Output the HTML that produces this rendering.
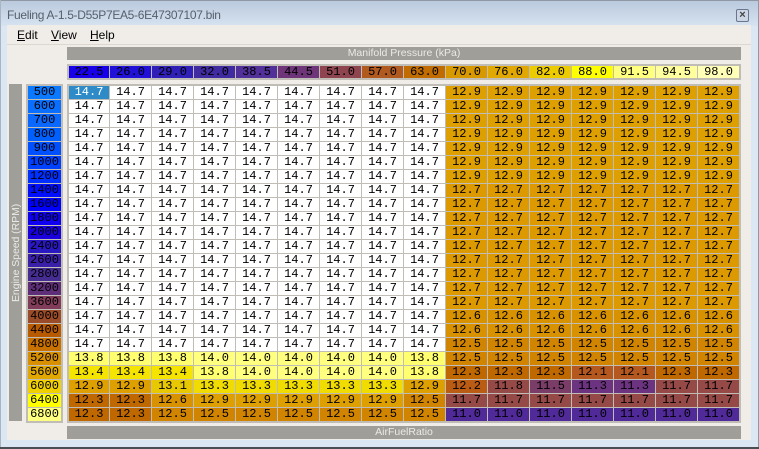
<!DOCTYPE html>
<html><head><meta charset="utf-8"><style>
html,body{margin:0;padding:0}
body{width:759px;height:449px;position:relative;overflow:hidden;background:#dce7f4;font-family:"Liberation Sans",sans-serif}
.abs{position:absolute}
#tb{left:0;top:0;width:759px;height:26px;background:linear-gradient(#b9c8dc,#d6e2f0)}
#topline{left:0;top:0;width:759px;height:1px;background:#8f98a4}
#lline{left:0;top:0;width:1px;height:449px;background:#aab4c2}
#rline{left:758px;top:0;width:1px;height:449px;background:#8f98a4}
#title{left:7px;top:8px;font-size:12px;letter-spacing:-.32px;line-height:15px;color:#56606c;white-space:nowrap}
#close{left:736px;top:9px;width:11px;height:11px;border:1px solid #6a7590;border-radius:2px;background:#cdd6e4;color:#444;font-size:11px;line-height:11px;text-align:center;font-weight:bold}
#client{left:7px;top:25px;width:744px;height:415px;background:#f0ede8}
#menu{left:7px;top:25px;width:744px;height:19px;border-bottom:1px solid #dbd8d2}
#menu span{position:absolute;top:3px;font-size:12px;line-height:14px;color:#000}
#menu u{text-decoration:underline}
.bar{background:#9f9e98;color:#eceae6;font-size:10.5px;line-height:13px;text-align:center}
#botline{left:0;top:447px;width:759px;height:2px;background:#4a4f55}
.g{display:grid;background:#c0bdb7;gap:1px}
#hd{left:67px;top:64px;padding:2px;grid-template-columns:40px repeat(15,41px);grid-auto-rows:12px}
#rp{left:26px;top:84px;padding:2px;width:33px;grid-template-columns:33px;grid-auto-rows:13px}
#tbl{left:67px;top:84px;padding:2px;grid-template-columns:40px repeat(15,41px);grid-auto-rows:13px}
.g i{display:block;font:normal 12px/13px "Liberation Mono",monospace;text-align:center;color:#000;background:#fff;overflow:hidden}
#hd i{line-height:12px}
i.s{background:#2e8bc8;color:#fff}
i.a{background:#ffff80}
i.b{background:#ffff70}
i.c{background:#f5e400}
i.d{background:#f0dc00}
i.e{background:#e8c800}
i.f{background:#dea000}
i.h{background:#dc9a00}
i.j{background:#d89200}
i.k{background:#d08400}
i.l{background:#c06800}
i.m{background:#ba5c14}
i.n{background:#b45820}
i.o{background:#954a48}
i.p{background:#7a3d68}
i.q{background:#6c3480}
i.r{background:#502a98}
</style></head><body>
<div class="abs" id="tb"></div>
<div class="abs" id="topline"></div>
<div class="abs" id="lline"></div>
<div class="abs" id="rline"></div>
<div class="abs" id="title">Fueling A-1.5-D55P7EA5-6E47307107.bin</div>
<div class="abs" id="close">&#215;</div>
<div class="abs" id="client"></div>
<div class="abs" id="menu"><span style="left:10px"><u>E</u>dit</span><span style="left:44px"><u>V</u>iew</span><span style="left:83px"><u>H</u>elp</span></div>
<div class="abs bar" style="left:67px;top:47px;width:674px;height:13px">Manifold Pressure (kPa)</div>
<div class="abs bar" style="left:67px;top:426px;width:674px;height:13px">AirFuelRatio</div>
<div class="abs bar" style="left:9px;top:84px;width:13px;height:337px"></div>
<svg class="abs" style="left:9px;top:84px" width="13" height="337"><text transform="translate(10,218) rotate(-90)" font-family="Liberation Sans" font-size="10.4" fill="#eceae6">Engine Speed (RPM)</text></svg>
<div class="abs g" id="hd">
<i style="background:#1800e8">22.5</i><i style="background:#2010d8">26.0</i><i style="background:#3020b8">29.0</i><i style="background:#402ca0">32.0</i><i style="background:#52309a">38.5</i><i style="background:#6e3578">44.5</i><i style="background:#8f4550">51.0</i><i style="background:#b05a20">57.0</i><i style="background:#c06c00">63.0</i><i style="background:#d89800">70.0</i><i style="background:#e0a800">76.0</i><i style="background:#eccc00">82.0</i><i style="background:#ffff00">88.0</i><i style="background:#ffff80">91.5</i><i style="background:#ffffa0">94.5</i><i style="background:#ffffb8">98.0</i>
</div>
<div class="abs g" id="rp">
<i style="background:#0a78ff">500</i><i style="background:#0a6eff">600</i><i style="background:#0a68ff">700</i><i style="background:#0060ff">800</i><i style="background:#0050ff">900</i><i style="background:#0040ff">1000</i><i style="background:#0030ff">1200</i><i style="background:#0010ff">1400</i><i style="background:#0000ff">1600</i><i style="background:#1000f0">1800</i><i style="background:#1a00dc">2000</i><i style="background:#2a18c0">2400</i><i style="background:#3a20a8">2600</i><i style="background:#452c90">2800</i><i style="background:#5e2f78">3200</i><i style="background:#803c58">3600</i><i style="background:#9a4c28">4000</i><i style="background:#b85a00">4400</i><i style="background:#c87000">4800</i><i style="background:#d89000">5200</i><i style="background:#e0a800">5600</i><i style="background:#f0d000">6000</i><i style="background:#ffff00">6400</i><i style="background:#ffff80">6800</i>
</div>
<div class="abs g" id="tbl">
<i class="s">14.7</i><i>14.7</i><i>14.7</i><i>14.7</i><i>14.7</i><i>14.7</i><i>14.7</i><i>14.7</i><i>14.7</i><i class="f">12.9</i><i class="f">12.9</i><i class="f">12.9</i><i class="f">12.9</i><i class="f">12.9</i><i class="f">12.9</i><i class="f">12.9</i>
<i>14.7</i><i>14.7</i><i>14.7</i><i>14.7</i><i>14.7</i><i>14.7</i><i>14.7</i><i>14.7</i><i>14.7</i><i class="f">12.9</i><i class="f">12.9</i><i class="f">12.9</i><i class="f">12.9</i><i class="f">12.9</i><i class="f">12.9</i><i class="f">12.9</i>
<i>14.7</i><i>14.7</i><i>14.7</i><i>14.7</i><i>14.7</i><i>14.7</i><i>14.7</i><i>14.7</i><i>14.7</i><i class="f">12.9</i><i class="f">12.9</i><i class="f">12.9</i><i class="f">12.9</i><i class="f">12.9</i><i class="f">12.9</i><i class="f">12.9</i>
<i>14.7</i><i>14.7</i><i>14.7</i><i>14.7</i><i>14.7</i><i>14.7</i><i>14.7</i><i>14.7</i><i>14.7</i><i class="f">12.9</i><i class="f">12.9</i><i class="f">12.9</i><i class="f">12.9</i><i class="f">12.9</i><i class="f">12.9</i><i class="f">12.9</i>
<i>14.7</i><i>14.7</i><i>14.7</i><i>14.7</i><i>14.7</i><i>14.7</i><i>14.7</i><i>14.7</i><i>14.7</i><i class="f">12.9</i><i class="f">12.9</i><i class="f">12.9</i><i class="f">12.9</i><i class="f">12.9</i><i class="f">12.9</i><i class="f">12.9</i>
<i>14.7</i><i>14.7</i><i>14.7</i><i>14.7</i><i>14.7</i><i>14.7</i><i>14.7</i><i>14.7</i><i>14.7</i><i class="f">12.9</i><i class="f">12.9</i><i class="f">12.9</i><i class="f">12.9</i><i class="f">12.9</i><i class="f">12.9</i><i class="f">12.9</i>
<i>14.7</i><i>14.7</i><i>14.7</i><i>14.7</i><i>14.7</i><i>14.7</i><i>14.7</i><i>14.7</i><i>14.7</i><i class="f">12.9</i><i class="f">12.9</i><i class="f">12.9</i><i class="f">12.9</i><i class="f">12.9</i><i class="f">12.9</i><i class="f">12.9</i>
<i>14.7</i><i>14.7</i><i>14.7</i><i>14.7</i><i>14.7</i><i>14.7</i><i>14.7</i><i>14.7</i><i>14.7</i><i class="h">12.7</i><i class="h">12.7</i><i class="h">12.7</i><i class="h">12.7</i><i class="h">12.7</i><i class="h">12.7</i><i class="h">12.7</i>
<i>14.7</i><i>14.7</i><i>14.7</i><i>14.7</i><i>14.7</i><i>14.7</i><i>14.7</i><i>14.7</i><i>14.7</i><i class="h">12.7</i><i class="h">12.7</i><i class="h">12.7</i><i class="h">12.7</i><i class="h">12.7</i><i class="h">12.7</i><i class="h">12.7</i>
<i>14.7</i><i>14.7</i><i>14.7</i><i>14.7</i><i>14.7</i><i>14.7</i><i>14.7</i><i>14.7</i><i>14.7</i><i class="h">12.7</i><i class="h">12.7</i><i class="h">12.7</i><i class="h">12.7</i><i class="h">12.7</i><i class="h">12.7</i><i class="h">12.7</i>
<i>14.7</i><i>14.7</i><i>14.7</i><i>14.7</i><i>14.7</i><i>14.7</i><i>14.7</i><i>14.7</i><i>14.7</i><i class="h">12.7</i><i class="h">12.7</i><i class="h">12.7</i><i class="h">12.7</i><i class="h">12.7</i><i class="h">12.7</i><i class="h">12.7</i>
<i>14.7</i><i>14.7</i><i>14.7</i><i>14.7</i><i>14.7</i><i>14.7</i><i>14.7</i><i>14.7</i><i>14.7</i><i class="h">12.7</i><i class="h">12.7</i><i class="h">12.7</i><i class="h">12.7</i><i class="h">12.7</i><i class="h">12.7</i><i class="h">12.7</i>
<i>14.7</i><i>14.7</i><i>14.7</i><i>14.7</i><i>14.7</i><i>14.7</i><i>14.7</i><i>14.7</i><i>14.7</i><i class="h">12.7</i><i class="h">12.7</i><i class="h">12.7</i><i class="h">12.7</i><i class="h">12.7</i><i class="h">12.7</i><i class="h">12.7</i>
<i>14.7</i><i>14.7</i><i>14.7</i><i>14.7</i><i>14.7</i><i>14.7</i><i>14.7</i><i>14.7</i><i>14.7</i><i class="h">12.7</i><i class="h">12.7</i><i class="h">12.7</i><i class="h">12.7</i><i class="h">12.7</i><i class="h">12.7</i><i class="h">12.7</i>
<i>14.7</i><i>14.7</i><i>14.7</i><i>14.7</i><i>14.7</i><i>14.7</i><i>14.7</i><i>14.7</i><i>14.7</i><i class="h">12.7</i><i class="h">12.7</i><i class="h">12.7</i><i class="h">12.7</i><i class="h">12.7</i><i class="h">12.7</i><i class="h">12.7</i>
<i>14.7</i><i>14.7</i><i>14.7</i><i>14.7</i><i>14.7</i><i>14.7</i><i>14.7</i><i>14.7</i><i>14.7</i><i class="h">12.7</i><i class="h">12.7</i><i class="h">12.7</i><i class="h">12.7</i><i class="h">12.7</i><i class="h">12.7</i><i class="h">12.7</i>
<i>14.7</i><i>14.7</i><i>14.7</i><i>14.7</i><i>14.7</i><i>14.7</i><i>14.7</i><i>14.7</i><i>14.7</i><i class="j">12.6</i><i class="j">12.6</i><i class="j">12.6</i><i class="j">12.6</i><i class="j">12.6</i><i class="j">12.6</i><i class="j">12.6</i>
<i>14.7</i><i>14.7</i><i>14.7</i><i>14.7</i><i>14.7</i><i>14.7</i><i>14.7</i><i>14.7</i><i>14.7</i><i class="j">12.6</i><i class="j">12.6</i><i class="j">12.6</i><i class="j">12.6</i><i class="j">12.6</i><i class="j">12.6</i><i class="j">12.6</i>
<i>14.7</i><i>14.7</i><i>14.7</i><i>14.7</i><i>14.7</i><i>14.7</i><i>14.7</i><i>14.7</i><i>14.7</i><i class="k">12.5</i><i class="k">12.5</i><i class="k">12.5</i><i class="k">12.5</i><i class="k">12.5</i><i class="k">12.5</i><i class="k">12.5</i>
<i class="b">13.8</i><i class="b">13.8</i><i class="b">13.8</i><i class="a">14.0</i><i class="a">14.0</i><i class="a">14.0</i><i class="a">14.0</i><i class="a">14.0</i><i class="b">13.8</i><i class="k">12.5</i><i class="k">12.5</i><i class="k">12.5</i><i class="k">12.5</i><i class="k">12.5</i><i class="k">12.5</i><i class="k">12.5</i>
<i class="c">13.4</i><i class="c">13.4</i><i class="c">13.4</i><i class="b">13.8</i><i class="a">14.0</i><i class="a">14.0</i><i class="a">14.0</i><i class="a">14.0</i><i class="b">13.8</i><i class="l">12.3</i><i class="l">12.3</i><i class="l">12.3</i><i class="n">12.1</i><i class="n">12.1</i><i class="l">12.3</i><i class="l">12.3</i>
<i class="f">12.9</i><i class="f">12.9</i><i class="e">13.1</i><i class="d">13.3</i><i class="d">13.3</i><i class="d">13.3</i><i class="d">13.3</i><i class="d">13.3</i><i class="f">12.9</i><i class="m">12.2</i><i class="o">11.8</i><i class="p">11.5</i><i class="q">11.3</i><i class="q">11.3</i><i class="o">11.7</i><i class="o">11.7</i>
<i class="l">12.3</i><i class="l">12.3</i><i class="j">12.6</i><i class="f">12.9</i><i class="f">12.9</i><i class="f">12.9</i><i class="f">12.9</i><i class="f">12.9</i><i class="k">12.5</i><i class="o">11.7</i><i class="o">11.7</i><i class="o">11.7</i><i class="o">11.7</i><i class="o">11.7</i><i class="o">11.7</i><i class="o">11.7</i>
<i class="l">12.3</i><i class="l">12.3</i><i class="k">12.5</i><i class="k">12.5</i><i class="k">12.5</i><i class="k">12.5</i><i class="k">12.5</i><i class="k">12.5</i><i class="k">12.5</i><i class="r">11.0</i><i class="r">11.0</i><i class="r">11.0</i><i class="r">11.0</i><i class="r">11.0</i><i class="r">11.0</i><i class="r">11.0</i>
</div>
<div class="abs" id="botline"></div>
</body></html>
